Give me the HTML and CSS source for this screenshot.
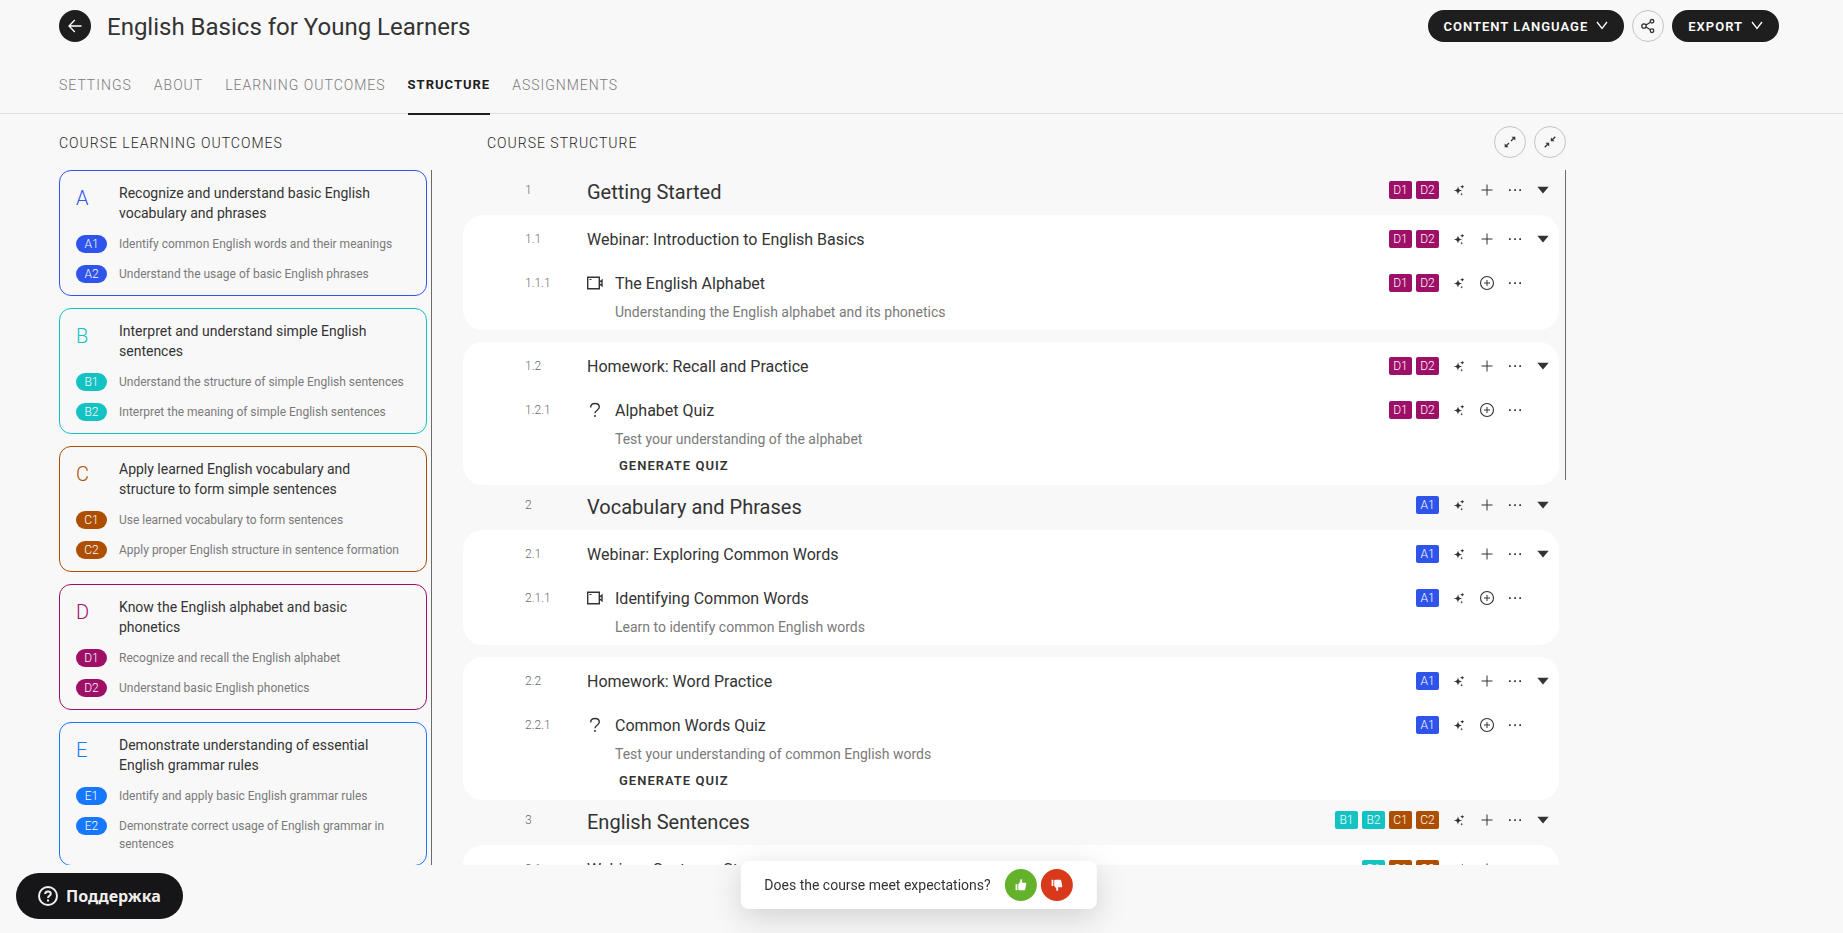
FILE: index.html
```html
<!DOCTYPE html>
<html lang="en">
<head>
  <meta charset="UTF-8" />
  <meta name="viewport" content="width=device-width, initial-scale=1" />
  <title>English Basics for Young Learners</title>
  <link rel="stylesheet" href="styles.css">
</head>
<body>
  <svg class="sprite" aria-hidden="true">
    <symbol id="i-spark" viewBox="0 0 16 16">
      <path d="M7 4.200c.5 2.900 1.300 3.700 4.200 4.200-2.900.5-3.700 1.300-4.200 4.200-.5-2.900-1.300-3.700-4.200-4.200 2.900-.5 3.700-1.300 4.200-4.200zM11.300 2.600c.3 1.400.7 1.800 2.100 2.100-1.400.3-1.800.7-2.100 2.100-.3-1.400-.7-1.800-2.100-2.100 1.400-.3 1.800-.7 2.100-2.100zM10.700 10.500c.2 1.100.5 1.400 1.600 1.600-1.100.2-1.400.5-1.600 1.600-.2-1.100-.5-1.400-1.600-1.600 1.100-.2 1.400-.5 1.600-1.600z" fill="currentColor" />
    </symbol>
    <symbol id="i-plus" viewBox="0 0 16 16">
      <path d="M8 2.500v11M2.500 8h11" stroke="currentColor" fill="none" />
    </symbol>
    <symbol id="i-plus-circle" viewBox="0 0 16 16">
      <circle cx="8" cy="8" r="6.500" stroke="currentColor" stroke-width="1.100" fill="none" />
      <path d="M8 5v6M5 8h6" stroke="currentColor" fill="none" />
    </symbol>
    <symbol id="i-dots" viewBox="0 0 16 16">
      <path d="M2 7.200h1.700v1.700H2zM7.200 7.200h1.700v1.700H7.200zM12.300 7.200h1.700v1.700h-1.700z" fill="currentColor" />
    </symbol>
    <symbol id="i-caret" viewBox="0 0 16 16">
      <path d="M2.300 4.800h11.400L8 11.500z" fill="currentColor" />
    </symbol>
    <symbol id="i-chevron" viewBox="0 0 12 12">
      <path d="M1 2l5 6.500L11 2" stroke="currentColor" stroke-width="1.300" fill="none" />
    </symbol>
    <symbol id="i-video" viewBox="0 0 16 16">
      <path d="M.7 2.200h11.600v11.600H.7z" stroke="currentColor" stroke-width="1.400" fill="none" />
      <path d="M12.300 7.200l2.700-2v5.600l-2.700-2" stroke="currentColor" stroke-width="1.400" fill="none" />
      <path d="M2.500 4.500h2" stroke="currentColor" fill="none" />
    </symbol>
    <symbol id="i-question" viewBox="0 0 16 16">
      <path d="M3.700 5.400C3.700 2.800 5.500 1.500 8 1.500s4.300 1.400 4.300 3.600c0 3-4.300 3.200-4.300 6.100" stroke="currentColor" stroke-width="1.400" fill="none" />
      <circle cx="8" cy="14" r="1" fill="currentColor" />
    </symbol>
    <symbol id="i-thumb" viewBox="0 0 16 16">
      <path d="M2 7h2v7H2zM5 7l2.300-2.800V2.500c0-.7.500-1.200 1.100-1.200s1.200.5 1.200 1.300L9.300 5.500H13c.7 0 1.200.5 1.200 1.200L13 12.900c-.1.700-.6 1.100-1.200 1.100H6.200L5 13.400z" fill="currentColor" />
    </symbol>
  </svg>

  <header class="header">
    <div class="title-bar">
      <a class="back" href="#" aria-label="Back">
        <svg width="16" height="16" viewBox="0 0 16 16"><path d="M14.500 8H2M7.800 2L2 8l5.800 6" stroke="currentColor" stroke-width="1.300" fill="none" /></svg>
      </a>
      <h1>English Basics for Young Learners</h1>
      <button class="pill-button">CONTENT LANGUAGE <svg width="12" height="12"><use href="#i-chevron" /></svg></button>
      <button class="round-button" aria-label="Share">
        <svg width="16" height="16" viewBox="0 0 16 16" fill="none" stroke="currentColor" stroke-width="1.300">
          <circle cx="4" cy="8" r="2.200" /><circle cx="12" cy="3.300" r="1.800" /><circle cx="12" cy="12.700" r="1.800" />
          <path d="M6 7l4.400-2.700M6 9l4.400 2.700" />
        </svg>
      </button>
      <button class="pill-button">EXPORT <svg width="12" height="12"><use href="#i-chevron" /></svg></button>
    </div>
    <nav class="tabs">
      <a href="#">SETTINGS</a>
      <a href="#">ABOUT</a>
      <a href="#">LEARNING OUTCOMES</a>
      <a href="#" class="active">STRUCTURE</a>
      <a href="#">ASSIGNMENTS</a>
    </nav>
  </header>

  <main class="main">
    <section class="column">
      <div class="column-head">
        <h2>COURSE LEARNING OUTCOMES</h2>
      </div>
      <div class="scroller">
        <div class="outcomes">
          <article class="outcome a">
            <span class="letter">A</span>
            <h3>Recognize and understand basic English vocabulary and phrases</h3>
            <span class="code">A1</span><p>Identify common English words and their meanings</p>
            <span class="code">A2</span><p>Understand the usage of basic English phrases</p>
          </article>
          <article class="outcome b">
            <span class="letter">B</span>
            <h3>Interpret and understand simple English sentences</h3>
            <span class="code">B1</span><p>Understand the structure of simple English sentences</p>
            <span class="code">B2</span><p>Interpret the meaning of simple English sentences</p>
          </article>
          <article class="outcome c">
            <span class="letter">C</span>
            <h3>Apply learned English vocabulary and structure to form simple sentences</h3>
            <span class="code">C1</span><p>Use learned vocabulary to form sentences</p>
            <span class="code">C2</span><p>Apply proper English structure in sentence formation</p>
          </article>
          <article class="outcome d">
            <span class="letter">D</span>
            <h3>Know the English alphabet and basic phonetics</h3>
            <span class="code">D1</span><p>Recognize and recall the English alphabet</p>
            <span class="code">D2</span><p>Understand basic English phonetics</p>
          </article>
          <article class="outcome e">
            <span class="letter">E</span>
            <h3>Demonstrate understanding of essential English grammar rules</h3>
            <span class="code">E1</span><p>Identify and apply basic English grammar rules</p>
            <span class="code">E2</span><p>Demonstrate correct usage of English grammar in sentences</p>
          </article>
        </div>
        <div class="thumb"></div>
      </div>
    </section>

    <section class="column">
      <div class="column-head structure-head">
        <h2>COURSE STRUCTURE</h2>
        <button class="round-button" aria-label="Expand all">
          <svg width="12" height="12" viewBox="0 0 12 12"><path d="M7 5l3-3M5 7l-3 3" stroke="currentColor" stroke-width="1.300" /><path d="M7.500.7h3.800v3.800zM.7 7.500v3.800h3.800z" fill="currentColor" /></svg>
        </button>
        <button class="round-button" aria-label="Collapse all">
          <svg width="12" height="12" viewBox="0 0 12 12"><path d="M11.300.7l-3 3M.7 11.300l3-3" stroke="currentColor" stroke-width="1.300" /><path d="M6.800 1.500v3.700h3.700zM5.200 10.500V6.800H1.500z" fill="currentColor" /></svg>
        </button>
      </div>
      <div class="scroller wide">
        <div class="structure">
          <div class="row chapter">
            <span class="num">1</span><h3>Getting Started</h3>
            <span class="tag d">D1</span><span class="tag d">D2</span>
            <div class="actions">
              <button aria-label="Generate"><svg><use href="#i-spark" /></svg></button>
              <button aria-label="Add"><svg><use href="#i-plus" /></svg></button>
              <button aria-label="More"><svg><use href="#i-dots" /></svg></button>
              <button aria-label="Collapse"><svg><use href="#i-caret" /></svg></button>
            </div>
          </div>
          <div class="lesson">
            <div class="row">
              <span class="num">1.1</span><h4>Webinar: Introduction to English Basics</h4>
              <span class="tag d">D1</span><span class="tag d">D2</span>
              <div class="actions">
                <button aria-label="Generate"><svg><use href="#i-spark" /></svg></button>
                <button aria-label="Add"><svg><use href="#i-plus" /></svg></button>
                <button aria-label="More"><svg><use href="#i-dots" /></svg></button>
                <button aria-label="Collapse"><svg><use href="#i-caret" /></svg></button>
              </div>
            </div>
            <div class="row item">
              <span class="num">1.1.1</span><svg class="kind"><use href="#i-video" /></svg><h4>The English Alphabet</h4>
              <span class="tag d">D1</span><span class="tag d">D2</span>
              <div class="actions">
                <button aria-label="Generate"><svg><use href="#i-spark" /></svg></button>
                <button aria-label="Add"><svg><use href="#i-plus-circle" /></svg></button>
                <button aria-label="More"><svg><use href="#i-dots" /></svg></button>
              </div>
            </div>
            <p class="about">Understanding the English alphabet and its phonetics</p>
          </div>
          <div class="lesson">
            <div class="row">
              <span class="num">1.2</span><h4>Homework: Recall and Practice</h4>
              <span class="tag d">D1</span><span class="tag d">D2</span>
              <div class="actions">
                <button aria-label="Generate"><svg><use href="#i-spark" /></svg></button>
                <button aria-label="Add"><svg><use href="#i-plus" /></svg></button>
                <button aria-label="More"><svg><use href="#i-dots" /></svg></button>
                <button aria-label="Collapse"><svg><use href="#i-caret" /></svg></button>
              </div>
            </div>
            <div class="row item">
              <span class="num">1.2.1</span><svg class="kind"><use href="#i-question" /></svg><h4>Alphabet Quiz</h4>
              <span class="tag d">D1</span><span class="tag d">D2</span>
              <div class="actions">
                <button aria-label="Generate"><svg><use href="#i-spark" /></svg></button>
                <button aria-label="Add"><svg><use href="#i-plus-circle" /></svg></button>
                <button aria-label="More"><svg><use href="#i-dots" /></svg></button>
              </div>
            </div>
            <p class="about">Test your understanding of the alphabet</p>
            <button class="generate">GENERATE QUIZ</button>
          </div>

          <div class="row chapter">
            <span class="num">2</span><h3>Vocabulary and Phrases</h3>
            <span class="tag a">A1</span>
            <div class="actions">
              <button aria-label="Generate"><svg><use href="#i-spark" /></svg></button>
              <button aria-label="Add"><svg><use href="#i-plus" /></svg></button>
              <button aria-label="More"><svg><use href="#i-dots" /></svg></button>
              <button aria-label="Collapse"><svg><use href="#i-caret" /></svg></button>
            </div>
          </div>
          <div class="lesson">
            <div class="row">
              <span class="num">2.1</span><h4>Webinar: Exploring Common Words</h4>
              <span class="tag a">A1</span>
              <div class="actions">
                <button aria-label="Generate"><svg><use href="#i-spark" /></svg></button>
                <button aria-label="Add"><svg><use href="#i-plus" /></svg></button>
                <button aria-label="More"><svg><use href="#i-dots" /></svg></button>
                <button aria-label="Collapse"><svg><use href="#i-caret" /></svg></button>
              </div>
            </div>
            <div class="row item">
              <span class="num">2.1.1</span><svg class="kind"><use href="#i-video" /></svg><h4>Identifying Common Words</h4>
              <span class="tag a">A1</span>
              <div class="actions">
                <button aria-label="Generate"><svg><use href="#i-spark" /></svg></button>
                <button aria-label="Add"><svg><use href="#i-plus-circle" /></svg></button>
                <button aria-label="More"><svg><use href="#i-dots" /></svg></button>
              </div>
            </div>
            <p class="about">Learn to identify common English words</p>
          </div>
          <div class="lesson">
            <div class="row">
              <span class="num">2.2</span><h4>Homework: Word Practice</h4>
              <span class="tag a">A1</span>
              <div class="actions">
                <button aria-label="Generate"><svg><use href="#i-spark" /></svg></button>
                <button aria-label="Add"><svg><use href="#i-plus" /></svg></button>
                <button aria-label="More"><svg><use href="#i-dots" /></svg></button>
                <button aria-label="Collapse"><svg><use href="#i-caret" /></svg></button>
              </div>
            </div>
            <div class="row item">
              <span class="num">2.2.1</span><svg class="kind"><use href="#i-question" /></svg><h4>Common Words Quiz</h4>
              <span class="tag a">A1</span>
              <div class="actions">
                <button aria-label="Generate"><svg><use href="#i-spark" /></svg></button>
                <button aria-label="Add"><svg><use href="#i-plus-circle" /></svg></button>
                <button aria-label="More"><svg><use href="#i-dots" /></svg></button>
              </div>
            </div>
            <p class="about">Test your understanding of common English words</p>
            <button class="generate">GENERATE QUIZ</button>
          </div>

          <div class="row chapter">
            <span class="num">3</span><h3>English Sentences</h3>
            <span class="tag b">B1</span><span class="tag b">B2</span><span class="tag c">C1</span><span class="tag c">C2</span>
            <div class="actions">
              <button aria-label="Generate"><svg><use href="#i-spark" /></svg></button>
              <button aria-label="Add"><svg><use href="#i-plus" /></svg></button>
              <button aria-label="More"><svg><use href="#i-dots" /></svg></button>
              <button aria-label="Collapse"><svg><use href="#i-caret" /></svg></button>
            </div>
          </div>
          <div class="lesson">
            <div class="row">
              <span class="num">3.1</span><h4>Webinar: Sentence Structure</h4>
              <span class="tag b">B1</span><span class="tag c">C1</span><span class="tag c">C2</span>
              <div class="actions">
                <button aria-label="Generate"><svg><use href="#i-spark" /></svg></button>
                <button aria-label="Add"><svg><use href="#i-plus" /></svg></button>
                <button aria-label="More"><svg><use href="#i-dots" /></svg></button>
                <button aria-label="Collapse"><svg><use href="#i-caret" /></svg></button>
              </div>
            </div>
          </div>
        </div>
        <div class="thumb short"></div>
      </div>
    </section>
  </main>

  <div class="feedback">
    <span>Does the course meet expectations?</span>
    <button class="yes" aria-label="Yes"><svg width="14" height="14"><use href="#i-thumb" /></svg></button>
    <button class="no" aria-label="No"><svg width="14" height="14"><use href="#i-thumb" /></svg></button>
  </div>

  <button class="support">
    <svg width="20" height="20" viewBox="0 0 20 20" fill="none" stroke="currentColor" stroke-width="2">
      <circle cx="10" cy="10" r="9" />
      <path d="M7.200 8c0-1.700 1.200-2.600 2.800-2.600s2.800 1 2.800 2.400c0 1.900-2.800 2-2.800 4.200" />
      <path d="M10 13.600v2" />
    </svg>
    Поддержка
  </button>
</body>
</html>
```
FILE: styles.css
```css
* {
  box-sizing: border-box;
}
body {
  margin: 0;
  height: 100vh;
  overflow: hidden;
  display: flex;
  flex-direction: column;
  font-family: Roboto, sans-serif;
  font-size: 14px;
  color: #333;
  background: #f8f8f8;
}
h1, h2, h3, h4, p {
  margin: 0;
  font-weight: 400;
}
button {
  font-family: inherit;
  color: inherit;
  border: none;
  background: none;
  padding: 0;
  cursor: pointer;
}
a {
  color: inherit;
  text-decoration: none;
}
.sprite {
  display: none;
}

/* header */
.header {
  border-bottom: 1px solid #dedede;
  padding: 10px 64px 0 59px;
}
.title-bar {
  display: flex;
  align-items: center;
  gap: 8px;
}
.back {
  display: flex;
  align-items: center;
  justify-content: center;
  width: 32px;
  height: 32px;
  border-radius: 50%;
  background: #1e1e1e;
  color: #fff;
}
h1 {
  flex: 1;
  margin-left: 8px;
  padding-top: 2px;
  font-size: 24px;
  line-height: 30px;
}
.pill-button {
  display: flex;
  align-items: center;
  gap: 8px;
  height: 32px;
  padding: 0 16px;
  border-radius: 16px;
  background: #1e1e1e;
  color: #fff;
  font-size: 13px;
  font-weight: 600;
  letter-spacing: 1px;
}
.round-button {
  display: flex;
  align-items: center;
  justify-content: center;
  width: 32px;
  height: 32px;
  border: 1px solid #c4c4c4;
  border-radius: 50%;
}
.tabs {
  display: flex;
  gap: 22px;
  margin-top: 32px;
  color: #7a7a7a;
  font-weight: 300;
  letter-spacing: 1px;
}
.tabs a {
  line-height: 22px;
  padding-bottom: 17px;
  margin-bottom: -2px;
  border-bottom: 2px solid transparent;
}
.tabs .active {
  color: #1e1e1e;
  font-size: 13px;
  font-weight: 700;
  border-color: #1e1e1e;
}

/* columns */
.main {
  flex: 1;
  min-height: 0;
  display: grid;
  grid-template-columns: 373fr 1103fr 182fr;
  grid-template-rows: minmax(0, 1fr);
  gap: 31px;
  padding: 12px 64px 68px 59px;
}
.column {
  display: flex;
  flex-direction: column;
  min-width: 0;
}
.column-head {
  display: flex;
  align-items: center;
  gap: 8px;
  height: 32px;
  margin-bottom: 12px;
}
.structure-head {
  padding-left: 24px;
}
h2 {
  flex: 1;
  padding-top: 2px;
  font-size: 14px;
  font-weight: 300;
  letter-spacing: 1px;
  color: #1e1e1e;
}
.scroller {
  flex: 1;
  min-height: 0;
  overflow: hidden;
  display: flex;
  align-items: flex-start;
  gap: 4px;
}
.wide {
  gap: 6px;
}
.thumb {
  flex: none;
  width: 1px;
  height: 100%;
  background: #6b6b6b;
}

/* outcomes */
.outcomes {
  flex: 1;
}
.outcome {
  display: grid;
  grid-template-columns: 31px 1fr;
  gap: 12px;
  align-items: start;
  padding: 12px 16px;
  margin-bottom: 12px;
  border: 1px solid var(--tone);
  border-radius: 12px;
}
.a {
  --tone: #2f54eb;
}
.b {
  --tone: #13c2c2;
}
.c {
  --tone: #ad4e00;
}
.d {
  --tone: #9e1068;
}
.e {
  --tone: #1677ff;
}
.letter {
  font-size: 20px;
  font-weight: 300;
  line-height: 30px;
  color: var(--tone);
}
.outcome h3 {
  padding-right: 16px;
  font-size: 14px;
  line-height: 20px;
}
.outcome p {
  font-size: 12px;
  line-height: 18px;
  color: #7a7a7a;
}
.code, .tag {
  display: block;
  height: 18px;
  line-height: 18px;
  font-size: 12px;
  font-weight: 300;
  text-align: center;
  color: #fff;
  background: var(--tone);
}
.code {
  border-radius: 9px;
}

/* structure */
.structure {
  flex: 1;
  min-width: 0;
}
.row {
  display: flex;
  align-items: center;
  gap: 4px;
  height: 24px;
  padding: 0 2px 0 62px;
}
.row h3, .row h4 {
  flex: 1;
}
.row h3 {
  font-size: 20px;
  line-height: 24px;
  padding-top: 4px;
}
.row h4 {
  font-size: 16px;
  line-height: 24px;
  padding-top: 1px;
}
.chapter {
  margin: 8px 0 13px;
}
.num {
  width: 58px;
  font-size: 12px;
  font-weight: 300;
  color: #6b6b6b;
}
.kind {
  width: 16px;
  height: 16px;
  margin-right: 8px;
}
.tag {
  width: 23px;
  border-radius: 2px;
}
.actions {
  display: flex;
  margin-left: 2px;
}
.actions button {
  display: flex;
  align-items: center;
  justify-content: center;
  width: 28px;
  height: 24px;
}
.actions svg {
  width: 16px;
  height: 16px;
}
.lesson {
  padding: 12px 0 8px;
  border-radius: 20px;
  background: #fff;
}
.lesson + .lesson {
  margin-top: 12px;
}
.item {
  margin-top: 20px;
  padding-right: 30px;
}
.about {
  margin: 7px 0 0 152px;
  line-height: 20px;
  color: #7a7a7a;
}
.generate {
  display: block;
  height: 24px;
  margin: 4px 0 0 156px;
  font-size: 13px;
  font-weight: 600;
  letter-spacing: 1px;
}
.short {
  height: 310px;
}

/* floating widgets */
.feedback {
  position: fixed;
  bottom: 24px;
  left: calc(50% - 3px);
  transform: translateX(-50%);
  display: flex;
  align-items: center;
  gap: 4px;
  height: 48px;
  padding: 0 24px;
  border-radius: 8px;
  background: #fff;
  box-shadow: 0 8px 32px rgba(0, 0, 0, 0.16);
  white-space: nowrap;
}
.feedback span {
  margin-right: 10px;
}
.feedback button {
  display: flex;
  align-items: center;
  justify-content: center;
  width: 32px;
  height: 32px;
  border-radius: 50%;
  color: #fff;
}
.feedback .yes {
  background: #64b12b;
}
.feedback .no {
  background: #d9391b;
}
.no svg {
  transform: scaleY(-1);
}
.support {
  position: fixed;
  left: 16px;
  bottom: 14px;
  display: flex;
  align-items: center;
  gap: 8px;
  height: 46px;
  padding: 0 22px;
  border-radius: 23px;
  background: #161618;
  color: #f0efec;
  font: 700 16px "Noto Sans", sans-serif;
}
```
